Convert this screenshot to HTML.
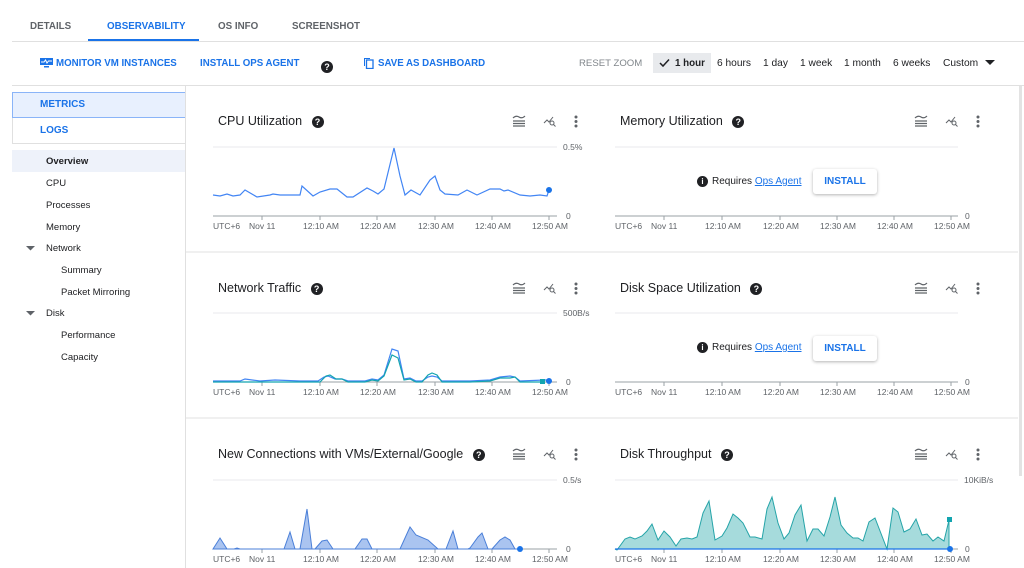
<!DOCTYPE html>
<html><head><meta charset="utf-8">
<style>
*{margin:0;padding:0;box-sizing:border-box}
body{width:1024px;height:568px;overflow:hidden;background:#fff;font-family:"Liberation Sans",Arial,sans-serif;color:#202124;position:relative}
.a{position:absolute;white-space:nowrap}
.tab{font-size:9.8px;font-weight:bold;color:#5f6368;top:21px}
.btn{font-size:9.7px;font-weight:bold;color:#1a73e8;top:58px}
.tr{font-size:10.2px;color:#202124;top:58px}
.nav{font-size:9.5px;color:#202124}
.ttl{font-size:12.5px;color:#202124}
.q{display:inline-block;width:12px;height:12px;border-radius:50%;background:#202124;color:#fff;font-size:9px;font-weight:bold;text-align:center;line-height:12px}
svg text{font-family:"Liberation Sans",Arial,sans-serif;font-size:8.5px;fill:#5f6368}
.inst{position:absolute;width:64px;height:25px;border-radius:3px;box-shadow:0 1px 3px rgba(0,0,0,.3);font-size:10px;font-weight:bold;color:#1a73e8;text-align:center;line-height:25px;background:#fff}
.req{font-size:10px;color:#202124}
.req u{color:#1a73e8}
</style></head><body>
<div class="a tab" style="left:30px">DETAILS</div>
<div class="a tab" style="left:107px;color:#1a73e8">OBSERVABILITY</div>
<div class="a tab" style="left:218px">OS INFO</div>
<div class="a tab" style="left:292px">SCREENSHOT</div>
<div class="a" style="left:88px;top:39px;width:111px;height:2px;background:#1a73e8"></div>
<div class="a" style="left:12px;top:41px;width:1012px;height:1px;background:#e0e0e0"></div>

<svg class="a" style="left:40px;top:58px" width="13" height="10" viewBox="0 0 13 10"><rect x="0" y="0" width="13" height="7" fill="#1a73e8"/><polyline points="1,4 4,4 5.5,2 7,5 8.5,3 12,3" stroke="#fff" fill="none" stroke-width="1"/><rect x="4" y="8" width="5" height="1.5" fill="#1a73e8"/></svg>
<div class="a btn" style="left:56px">MONITOR VM INSTANCES</div>
<div class="a btn" style="left:200px">INSTALL OPS AGENT</div>
<div class="a" style="left:321px;top:57px"><span class="q">?</span></div>
<svg class="a" style="left:363px;top:57px" width="11" height="12" viewBox="0 0 11 12"><path d="M1 1h6v1H2v7H1z" fill="#1a73e8"/><rect x="3.5" y="3" width="6.5" height="8.5" fill="none" stroke="#1a73e8" stroke-width="1.3"/></svg>
<div class="a btn" style="left:378px">SAVE AS DASHBOARD</div>

<div class="a tr" style="left:579px;color:#80868b;font-size:9.6px">RESET ZOOM</div>
<div class="a" style="left:653px;top:53px;width:58px;height:20px;background:#e8eaed"></div>
<svg class="a" style="left:659px;top:58px" width="11" height="10"><polyline points="1,5 4,8 10,1.5" stroke="#202124" stroke-width="1.5" fill="none"/></svg>
<div class="a tr" style="left:675px;font-weight:bold;font-size:9.8px">1 hour</div>
<div class="a tr" style="left:717px">6 hours</div>
<div class="a tr" style="left:763px">1 day</div>
<div class="a tr" style="left:800px">1 week</div>
<div class="a tr" style="left:844px">1 month</div>
<div class="a tr" style="left:893px">6 weeks</div>
<div class="a tr" style="left:943px">Custom</div>
<svg class="a" style="left:985px;top:60px" width="10" height="6"><polygon points="0,0 10,0 5,5" fill="#202124"/></svg>
<div class="a" style="left:12px;top:85px;width:1012px;height:1px;background:#e0e0e0"></div>

<div class="a" style="left:12px;top:92px;width:174px;height:26px;background:#e8f0fe;border:1px solid #8ab4f8"></div>
<div class="a" style="left:40px;top:99px;font-size:10px;font-weight:bold;color:#1a73e8">METRICS</div>
<div class="a" style="left:12px;top:118px;width:174px;height:26px;border:1px solid #e0e0e0;border-top:none"></div>
<div class="a" style="left:40px;top:125px;font-size:10px;font-weight:bold;color:#1a73e8">LOGS</div>
<div class="a" style="left:12px;top:150px;width:174px;height:22px;background:#eef2fa"></div>
<div class="a nav" style="left:46px;top:156px;font-weight:bold">Overview</div>
<div class="a nav" style="left:46px;top:178px">CPU</div>
<div class="a nav" style="left:46px;top:200px">Processes</div>
<div class="a nav" style="left:46px;top:222px">Memory</div>
<svg class="a" style="left:26px;top:246px" width="9" height="5"><polygon points="0,0 9,0 4.5,4.5" fill="#5f6368"/></svg>
<div class="a nav" style="left:46px;top:243px">Network</div>
<div class="a nav" style="left:61px;top:265px">Summary</div>
<div class="a nav" style="left:61px;top:287px">Packet Mirroring</div>
<svg class="a" style="left:26px;top:311px" width="9" height="5"><polygon points="0,0 9,0 4.5,4.5" fill="#5f6368"/></svg>
<div class="a nav" style="left:46px;top:308px">Disk</div>
<div class="a nav" style="left:61px;top:330px">Performance</div>
<div class="a nav" style="left:61px;top:352px">Capacity</div>
<div class="a" style="left:185px;top:86px;width:1px;height:482px;background:#e0e0e0"></div>
<div class="a" style="left:1019px;top:86px;width:3px;height:390px;background:#e3e3e3"></div>

<div class="a ttl" style="left:218px;top:114px">CPU Utilization <span class="q" style="margin-left:6px">?</span></div>
<div class="a ttl" style="left:620px;top:114px">Memory Utilization <span class="q" style="margin-left:6px">?</span></div>
<div class="a ttl" style="left:218px;top:281px">Network Traffic <span class="q" style="margin-left:6px">?</span></div>
<div class="a ttl" style="left:620px;top:281px">Disk Space Utilization <span class="q" style="margin-left:6px">?</span></div>
<div class="a ttl" style="left:218px;top:447px">New Connections with VMs/External/Google <span class="q" style="margin-left:6px">?</span></div>
<div class="a ttl" style="left:620px;top:447px">Disk Throughput <span class="q" style="margin-left:6px">?</span></div>

<div class="a req" style="left:697px;top:176px"><span class="q" style="width:11px;height:11px;line-height:11px;font-size:8px;margin-right:4px">i</span>Requires <u>Ops Agent</u></div>
<div class="inst" style="left:813px;top:169px">INSTALL</div>
<div class="a req" style="left:697px;top:342px"><span class="q" style="width:11px;height:11px;line-height:11px;font-size:8px;margin-right:4px">i</span>Requires <u>Ops Agent</u></div>
<div class="inst" style="left:813px;top:336px">INSTALL</div>

<svg class="a" style="left:0;top:0" width="1024" height="568">
<defs>
<g id="ic">
<path d="M0 3 Q3 0 6 2 T12 1" stroke="#5f6368" fill="none" stroke-width="1.2"/>
<path d="M0 6h12M0 8.5h12M0 11h12" stroke="#5f6368" stroke-width="1.2"/>
<polyline points="31,8 34,5 36,7 40,2" stroke="#5f6368" fill="none" stroke-width="1"/>
<circle cx="39" cy="8" r="2" stroke="#5f6368" fill="none" stroke-width="1"/>
<path d="M40.5 9.5 L42.5 11.5" stroke="#5f6368"/>
<circle cx="63" cy="2" r="1.5" fill="#5f6368"/><circle cx="63" cy="6.5" r="1.5" fill="#5f6368"/><circle cx="63" cy="11" r="1.5" fill="#5f6368"/>
</g>
<g id="axL">
<line x1="213" y1="0" x2="557" y2="0" stroke="#e8eaed"/>
<line x1="213" y1="69" x2="557" y2="69" stroke="#9aa0a6"/>
<g stroke="#9aa0a6"><line x1="262" y1="69" x2="262" y2="73"/><line x1="320" y1="69" x2="320" y2="73"/><line x1="377" y1="69" x2="377" y2="73"/><line x1="435" y1="69" x2="435" y2="73"/><line x1="492" y1="69" x2="492" y2="73"/><line x1="549" y1="69" x2="549" y2="73"/></g>
<text x="213" y="82">UTC+6</text><text x="249" y="82">Nov 11</text><text x="303" y="82">12:10 AM</text><text x="360" y="82">12:20 AM</text><text x="418" y="82">12:30 AM</text><text x="475" y="82">12:40 AM</text><text x="532" y="82">12:50 AM</text>
<text x="566" y="72">0</text>
</g>
<g id="axR">
<line x1="615" y1="0" x2="958" y2="0" stroke="#e8eaed"/>
<line x1="615" y1="69" x2="958" y2="69" stroke="#9aa0a6"/>
<g stroke="#9aa0a6"><line x1="664" y1="69" x2="664" y2="73"/><line x1="722" y1="69" x2="722" y2="73"/><line x1="780" y1="69" x2="780" y2="73"/><line x1="837" y1="69" x2="837" y2="73"/><line x1="894" y1="69" x2="894" y2="73"/><line x1="951" y1="69" x2="951" y2="73"/></g>
<text x="615" y="82">UTC+6</text><text x="651" y="82">Nov 11</text><text x="705" y="82">12:10 AM</text><text x="763" y="82">12:20 AM</text><text x="820" y="82">12:30 AM</text><text x="877" y="82">12:40 AM</text><text x="934" y="82">12:50 AM</text>
<text x="965" y="72">0</text>
</g>
</defs>
<line x1="186" y1="252" x2="1018" y2="252" stroke="#e0e0e0"/>
<line x1="186" y1="418" x2="1018" y2="418" stroke="#e0e0e0"/>
<use href="#ic" x="513" y="115"/><use href="#ic" x="915" y="115"/>
<use href="#ic" x="513" y="282"/><use href="#ic" x="915" y="282"/>
<use href="#ic" x="513" y="448"/><use href="#ic" x="915" y="448"/>
<g transform="translate(0,147)"><use href="#axL"/><text x="563" y="3">0.5%</text></g>
<g transform="translate(0,147)"><use href="#axR"/></g>
<g transform="translate(0,313)"><use href="#axL"/><text x="563" y="3">500B/s</text></g>
<g transform="translate(0,313)"><use href="#axR"/></g>
<g transform="translate(0,480)"><use href="#axL"/><text x="563" y="3">0.5/s</text></g>
<g transform="translate(0,480)"><use href="#axR"/><text x="964" y="3">10KiB/s</text></g>

<polyline fill="none" stroke="#4285f4" stroke-width="1.2" points="213,195 220,196 227,194 233,196 240,195 245,190 257,197 270,195 273,194 280,195 300,195 302,186 313,196 320,192 330,189 337,189 347,197 353,197 367,188 373,191 378,194 384,189 394,148 400,176 405,195 411,190 420,195 430,180 435,176 440,190 445,194 458,195 467,190 473,193 477,195 490,189 500,189 504,191 508,190 520,195 530,196 540,195 547,196 549,190"/>
<circle cx="549" cy="190" r="3" fill="#1a73e8"/>

<polyline fill="none" stroke="#4285f4" stroke-width="1.2" points="213,381 240,381 245,379 260,381 275,380 300,381 318,381 324,377 328,376 335,379 342,379 348,381 365,381 372,379 378,380 384,375 392,349 398,351 404,379 410,378 416,381 422,381 428,377 432,376 437,377 442,381 470,381 490,380 500,377 510,376 515,377 520,381 545,380 549,380"/>
<polyline fill="none" stroke="#12a4af" stroke-width="1.2" points="213,382 300,382 320,382 326,376 330,375 336,379 342,379 348,382 365,382 372,380 378,381 384,376 392,355 398,358 404,380 410,379 416,382 422,382 428,375 432,373 437,375 442,382 470,382 490,381 500,378 510,378 515,377 520,382 545,382"/>
<rect x="540" y="379" width="5" height="5" fill="#12a4af"/><circle cx="549" cy="381" r="3" fill="#1a73e8"/>

<polygon fill="#aac4f0" stroke="#4a7fd8" stroke-width="1" points="213,549 220,538 227,549 234,549 237,548 240,549 250,549 284,549 290,532 295,549 300,549 307,509 312,549 315,549 322,541 327,540 333,549 355,549 362,539 367,539 372,549 400,549 410,527 416,535 428,540 438,549 446,549 453,531 458,549 468,549 470,548 478,537 482,533 488,549 492,549 500,540 505,537 510,540 515,549 520,549"/>
<line x1="213" y1="549" x2="520" y2="549" stroke="#4a7fd8"/>
<circle cx="520" cy="549" r="3" fill="#1a73e8"/>

<polygon fill="#a6dbdc" stroke="#25a4a8" stroke-width="1" points="615,549 617,550 625,539 630,537 635,539 642,536 647,531 652,524 658,540 664,531 670,537 676,546 681,539 687,538 692,539 697,537 703,513 709,501 715,540 722,536 727,528 733,514 738,518 743,523 750,537 755,537 762,539 767,509 772,497 778,523 784,539 789,533 795,515 801,505 807,541 813,529 818,529 824,536 830,517 835,497 841,525 847,533 853,538 858,538 863,541 869,522 875,518 887,549 893,508 898,512 904,532 910,529 916,519 922,535 927,534 933,541 938,537 944,541 949,520 949,549"/>
<line x1="615" y1="549" x2="950" y2="549" stroke="#1a73e8" stroke-width="1.2"/>
<rect x="947" y="517" width="5" height="5" fill="#12a4af"/><circle cx="950" cy="549" r="3" fill="#1a73e8"/>
</svg>
</body></html>
